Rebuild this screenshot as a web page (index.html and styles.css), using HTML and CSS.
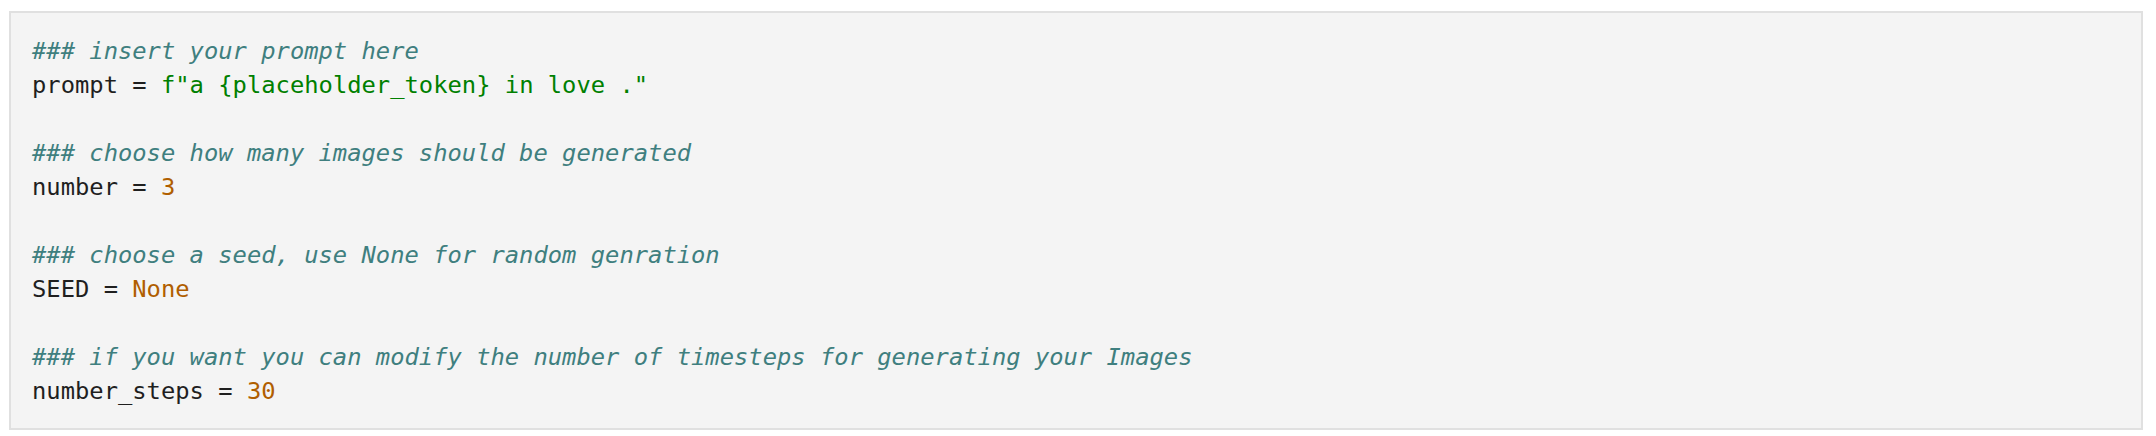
FILE: index.html
```html
<!DOCTYPE html>
<html lang="en">
<head>
<meta charset="utf-8">
<title>Code block</title>
<link rel="stylesheet" href="styles.css">
</head>
<body>
<div class="page">
<pre class="code"><span class="c">### insert your prompt here</span>
prompt = <span class="s">f"a {placeholder_token} in love ."</span>

<span class="c">### choose how many images should be generated</span>
number = <span class="n">3</span>

<span class="c">### choose a seed, use None for random genration</span>
SEED = <span class="n">None</span>

<span class="c">### if you want you can modify the number of timesteps for generating your Images</span>
number_steps = <span class="n">30</span></pre>
</div>
</body>
</html>
```

FILE: styles.css
```css
html, body {
  margin: 0;
  padding: 0;
  background: #ffffff;
}

.page {
  padding: 11px 13px 4px 9px;
}

.code {
  margin: 0;
  padding: 21px 21px 20px;
  background: #f4f4f4;
  border: 2px solid #e0e0e0;
  font-family: "DejaVu Sans Mono", monospace;
  font-size: 23.8px;
  line-height: 34px;
  color: #1f1f1f;
  white-space: pre;
  overflow: hidden;
}

.c {
  color: #3f7f7f;
  font-style: italic;
}

.s {
  color: #008000;
}

.n {
  color: #b05e00;
}
```
